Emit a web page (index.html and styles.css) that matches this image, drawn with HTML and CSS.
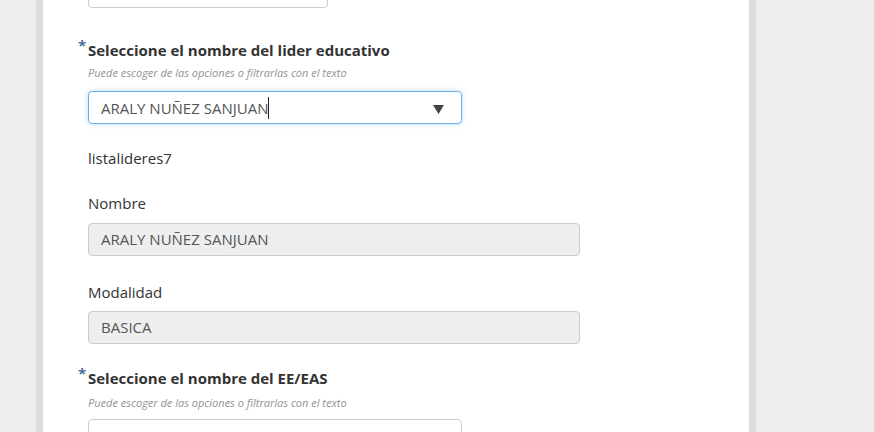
FILE: index.html
```html
<!DOCTYPE html>
<html lang="es">
<head>
<meta charset="utf-8">
<title>Encuesta</title>
<link rel="stylesheet" href="styles.css">
</head>
<body>
<div class="page">
  <div class="gutter"></div>
  <main class="card">
    <div class="field-box top-box"></div>

    <section class="question q1">
      <h3 class="q-label"><span class="req">*</span>Seleccione el nombre del lider educativo</h3>
      <p class="help">Puede escoger de las opciones o filtrarlas con el texto</p>
      <div class="select focused">
        <span class="select-value">ARALY NUÑEZ SANJUAN</span><span class="caret"></span>
        <svg class="arrow" width="11" height="10" viewBox="0 0 11 10"><polygon points="0,1 11,1 5.5,10" fill="#444"/></svg>
      </div>
    </section>

    <p class="plain list-name">listalideres7</p>

    <p class="plain field-label lbl-nombre">Nombre</p>
    <div class="field-box readonly">ARALY NUÑEZ SANJUAN</div>

    <p class="plain field-label lbl-modalidad">Modalidad</p>
    <div class="field-box readonly">BASICA</div>

    <section class="question q2">
      <h3 class="q-label"><span class="req">*</span>Seleccione el nombre del EE/EAS</h3>
      <p class="help">Puede escoger de las opciones o filtrarlas con el texto</p>
      <div class="select"></div>
    </section>
  </main>
  <div class="gutter-right"></div>
</div>
</body>
</html>
```

FILE: styles.css
```css
* { box-sizing: border-box; }
html, body { margin: 0; padding: 0; }
body {
  background: #eeeeee;
  font-family: "Open Sans", "Noto Sans", sans-serif;
  color: #333;
  height: 432px;
  overflow: hidden;
}
.page {
  display: flex;
  align-items: stretch;
  height: 432px;
}
.gutter { width: 36px; flex: none; }
.card {
  width: 720px;
  flex: none;
  background: #fff;
  border-left: 7px solid #dcdcdc;
  border-right: 7px solid #dcdcdc;
  padding-left: 45px;
  overflow: hidden;
}
.field-box {
  height: 33px;
  border: 1px solid #ccc;
  border-radius: 4px;
  background: #fff;
  font-size: 15px;
  line-height: 31px;
  padding-left: 12px;
  color: #555;
}
.top-box {
  width: 240px;
  margin-top: -25px;
}
.question { position: relative; }
.q-label {
  margin: 0;
  font-size: 15px;
  line-height: 20px;
  font-weight: 700;
  color: #333;
}
.req {
  display: inline-block;
  width: 10px;
  margin-left: -10px;
  color: #4f6d9a;
  font-size: 15px;
  font-weight: 700;
  vertical-align: 5px;
  line-height: 10px;
}
.help {
  margin: 5px 0 0;
  font-size: 11px;
  line-height: 16px;
  font-style: italic;
  color: #939393;
}
.q1 { margin-top: 32px; }
.select {
  width: 374px;
  height: 33px;
  margin-top: 10px;
  border: 1px solid #ccc;
  border-radius: 4px;
  display: flex;
  align-items: center;
  padding-left: 12px;
  font-size: 15px;
  color: #555;
  position: relative;
}
.select.focused {
  border-color: #66afe9;
  box-shadow: 0 0 5px rgba(102, 175, 233, 0.45);
}
.caret {
  display: inline-block;
  width: 1px;
  height: 22px;
  background: #222;
}
.arrow {
  position: absolute;
  right: 17px;
  top: 12px;
}
.plain {
  margin: 0;
  font-size: 15px;
  line-height: 20px;
  color: #333;
}
.list-name { margin-top: 24px; }
.lbl-nombre { margin-top: 25px; }
.lbl-modalidad { margin-top: 26px; }
.field-label + .field-box { margin-top: 10px; }
.readonly {
  width: 492px;
  background: #eeeeee;
  border-color: #ccc;
  color: #555;
}
.lbl-modalidad + .readonly { margin-top: 9px; }
.q2 { margin-top: 24px; }
.q2 .help { margin-top: 7px; }
.q2 .select { margin-top: 8px; }
```
